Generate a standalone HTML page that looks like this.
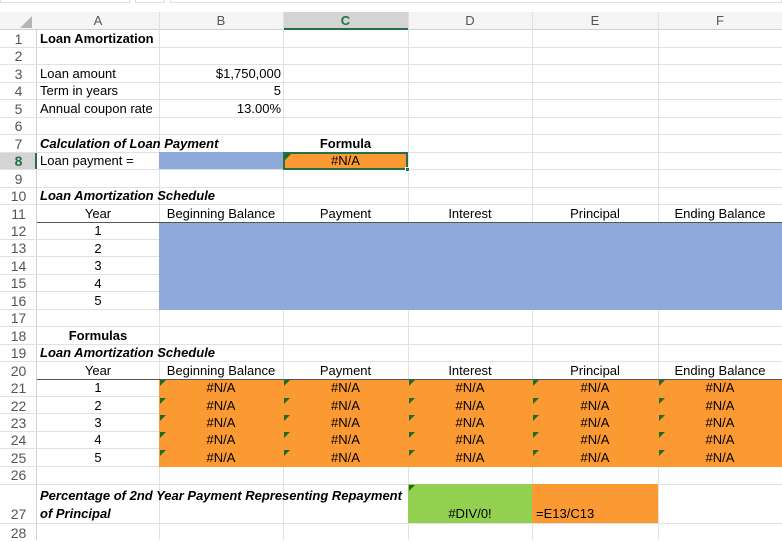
<!DOCTYPE html><html><head><style>
body{margin:0;width:782px;height:540px;overflow:hidden;background:#fff;font-family:"Liberation Sans",Arial,sans-serif;font-size:13px;color:#000;position:relative}
div{position:absolute;box-sizing:border-box}
.h{left:0;width:782px;height:1px;background:#e1e1e1}
.v{top:12px;width:1px;height:528px;background:#e1e1e1}
.t{white-space:nowrap;line-height:18px;height:17px}
.rh{left:0;width:37px;text-align:center;color:#555;font-size:14px;line-height:18px}
.ch{top:12px;height:18px;line-height:18px;text-align:center;color:#555;font-size:13px}
.c{text-align:center}
.r{text-align:right}
.tri{width:0;height:0;border-top:6px solid #1e6b22;border-right:6px solid transparent}
</style></head><body>
<div style="left:0;top:0;width:130px;height:3px;border:1px solid #ddd;border-top:none"></div>
<div style="left:135px;top:0;width:30px;height:3px;border:1px solid #ddd;border-top:none"></div>
<div style="left:170px;top:0;width:612px;height:3px;border:1px solid #ddd;border-top:none"></div>
<div style="left:0;top:12px;width:782px;height:18px;background:#f5f5f5;border-bottom:1px solid #d0d0d0"></div>
<div style="left:0;top:30px;width:37px;height:510px;background:#fff;border-right:1px solid #d0d0d0"></div>
<div style="left:20px;top:16px;width:0;height:0;border-bottom:12px solid #b5b5b5;border-left:12px solid transparent"></div>
<div style="left:283px;top:12px;width:125px;height:18px;background:#d4d4d4;border-bottom:2px solid #217346"></div>
<div style="left:0;top:152px;width:37px;height:17px;background:#d4d4d4;border-right:2px solid #217346"></div>
<div class="ch" style="left:37px;width:122px">A</div>
<div class="ch" style="left:159px;width:124px">B</div>
<div class="ch" style="left:283px;width:125px;color:#217346;font-weight:bold">C</div>
<div class="ch" style="left:408px;width:124px">D</div>
<div class="ch" style="left:532px;width:126px">E</div>
<div class="ch" style="left:658px;width:124px">F</div>
<div class="v" style="left:159px"></div><div class="v" style="left:283px"></div><div class="v" style="left:408px"></div><div class="v" style="left:532px"></div><div class="v" style="left:658px"></div>
<div class="h" style="top:47px"></div><div class="h" style="top:64px"></div><div class="h" style="top:82px"></div><div class="h" style="top:99px"></div><div class="h" style="top:117px"></div><div class="h" style="top:134px"></div><div class="h" style="top:152px"></div><div class="h" style="top:169px"></div><div class="h" style="top:187px"></div><div class="h" style="top:204px"></div><div class="h" style="top:239px"></div><div class="h" style="top:256px"></div><div class="h" style="top:274px"></div><div class="h" style="top:291px"></div><div class="h" style="top:309px"></div><div class="h" style="top:326px"></div><div class="h" style="top:344px"></div><div class="h" style="top:361px"></div><div class="h" style="top:396px"></div><div class="h" style="top:413px"></div><div class="h" style="top:431px"></div><div class="h" style="top:448px"></div><div class="h" style="top:466px"></div><div class="h" style="top:484px"></div><div class="h" style="top:523px"></div>
<div style="left:159px;top:152px;width:124px;height:17px;background:#8eaadb"></div>
<div style="left:159px;top:222px;width:623px;height:88px;background:#8eaadb"></div>
<div style="left:159px;top:379px;width:623px;height:88px;background:#fb9a33"></div>
<div style="left:283px;top:152px;width:125px;height:18px;background:#fb9a33;border:2px solid #217346"></div>
<div style="left:405px;top:167px;width:5px;height:5px;background:#217346;border:1px solid #fff"></div>
<div style="left:408px;top:484px;width:124px;height:39px;background:#92d050"></div>
<div style="left:532px;top:484px;width:126px;height:39px;background:#fb9a33"></div>
<div style="left:37px;top:222px;width:745px;height:1px;background:#555"></div>
<div style="left:37px;top:379px;width:745px;height:1px;background:#555"></div>
<div class="rh" style="top:30px">1</div><div class="rh" style="top:47px">2</div><div class="rh" style="top:65px">3</div><div class="rh" style="top:82px">4</div><div class="rh" style="top:100px">5</div><div class="rh" style="top:117px">6</div><div class="rh" style="top:135px">7</div><div class="rh" style="top:152px;color:#217346;font-weight:bold">8</div><div class="rh" style="top:170px">9</div><div class="rh" style="top:187px">10</div><div class="rh" style="top:205px">11</div><div class="rh" style="top:222px">12</div><div class="rh" style="top:239px">13</div><div class="rh" style="top:257px">14</div><div class="rh" style="top:274px">15</div><div class="rh" style="top:292px">16</div><div class="rh" style="top:309px">17</div><div class="rh" style="top:327px">18</div><div class="rh" style="top:344px">19</div><div class="rh" style="top:362px">20</div><div class="rh" style="top:379px">21</div><div class="rh" style="top:397px">22</div><div class="rh" style="top:414px">23</div><div class="rh" style="top:431px">24</div><div class="rh" style="top:449px">25</div><div class="rh" style="top:466px">26</div><div class="rh" style="top:505px">27</div><div class="rh" style="top:524px">28</div>
<div class="t" style="left:40px;top:30px;font-weight:bold">Loan Amortization</div>
<div class="t" style="left:40px;top:65px">Loan amount</div><div class="t r" style="left:159px;width:122px;top:65px">$1,750,000</div>
<div class="t" style="left:40px;top:82px">Term in years</div><div class="t r" style="left:159px;width:122px;top:82px">5</div>
<div class="t" style="left:40px;top:100px">Annual coupon rate</div><div class="t r" style="left:159px;width:122px;top:100px">13.00%</div>
<div class="t" style="left:40px;top:135px;font-weight:bold;font-style:italic">Calculation of Loan Payment</div>
<div class="t c" style="left:283px;width:125px;top:135px;font-weight:bold">Formula</div>
<div class="t" style="left:40px;top:152px">Loan payment =</div>
<div class="t c" style="left:283px;width:125px;top:152px">#N/A</div>
<div class="tri" style="left:285px;top:154px"></div>
<div class="t" style="left:40px;top:187px;font-weight:bold;font-style:italic">Loan Amortization Schedule</div>
<div class="t c" style="left:37px;width:122px;top:205px">Year</div><div class="t c" style="left:159px;width:124px;top:205px">Beginning Balance</div><div class="t c" style="left:283px;width:125px;top:205px">Payment</div><div class="t c" style="left:408px;width:124px;top:205px">Interest</div><div class="t c" style="left:532px;width:126px;top:205px">Principal</div><div class="t c" style="left:658px;width:124px;top:205px">Ending Balance</div>
<div class="t c" style="left:37px;width:122px;top:222px">1</div><div class="t c" style="left:37px;width:122px;top:240px">2</div><div class="t c" style="left:37px;width:122px;top:257px">3</div><div class="t c" style="left:37px;width:122px;top:275px">4</div><div class="t c" style="left:37px;width:122px;top:292px">5</div>
<div class="t c" style="left:37px;width:122px;top:327px;font-weight:bold">Formulas</div>
<div class="t" style="left:40px;top:344px;font-weight:bold;font-style:italic">Loan Amortization Schedule</div>
<div class="t c" style="left:37px;width:122px;top:362px">Year</div><div class="t c" style="left:159px;width:124px;top:362px">Beginning Balance</div><div class="t c" style="left:283px;width:125px;top:362px">Payment</div><div class="t c" style="left:408px;width:124px;top:362px">Interest</div><div class="t c" style="left:532px;width:126px;top:362px">Principal</div><div class="t c" style="left:658px;width:124px;top:362px">Ending Balance</div>
<div class="t c" style="left:37px;width:122px;top:379px">1</div><div class="t c" style="left:37px;width:122px;top:397px">2</div><div class="t c" style="left:37px;width:122px;top:414px">3</div><div class="t c" style="left:37px;width:122px;top:431px">4</div><div class="t c" style="left:37px;width:122px;top:449px">5</div>
<div id="na"></div>
<div class="t" style="left:40px;top:487px;font-weight:bold;font-style:italic">Percentage of 2nd Year Payment Representing Repayment</div>
<div class="t" style="left:40px;top:505px;font-weight:bold;font-style:italic">of Principal</div>
<div class="t c" style="left:408px;width:124px;top:505px">#DIV/0!</div>
<div class="tri" style="left:409px;top:485px"></div>
<div class="t" style="left:536px;top:505px">=E13/C13</div>
<script>
var tops=[379,397,414,431,449],ls=[159,283,408,532,658],ws=[124,125,124,126,124],h='';
for(var i=0;i<5;i++)for(var j=0;j<5;j++){h+='<div class="t c" style="left:'+ls[j]+'px;width:'+ws[j]+'px;top:'+tops[i]+'px">#N/A</div><div class="tri" style="left:'+(ls[j]+1)+'px;top:'+(tops[i]+1)+'px"></div>';}
document.getElementById('na').outerHTML=h;
</script>
</body></html>
